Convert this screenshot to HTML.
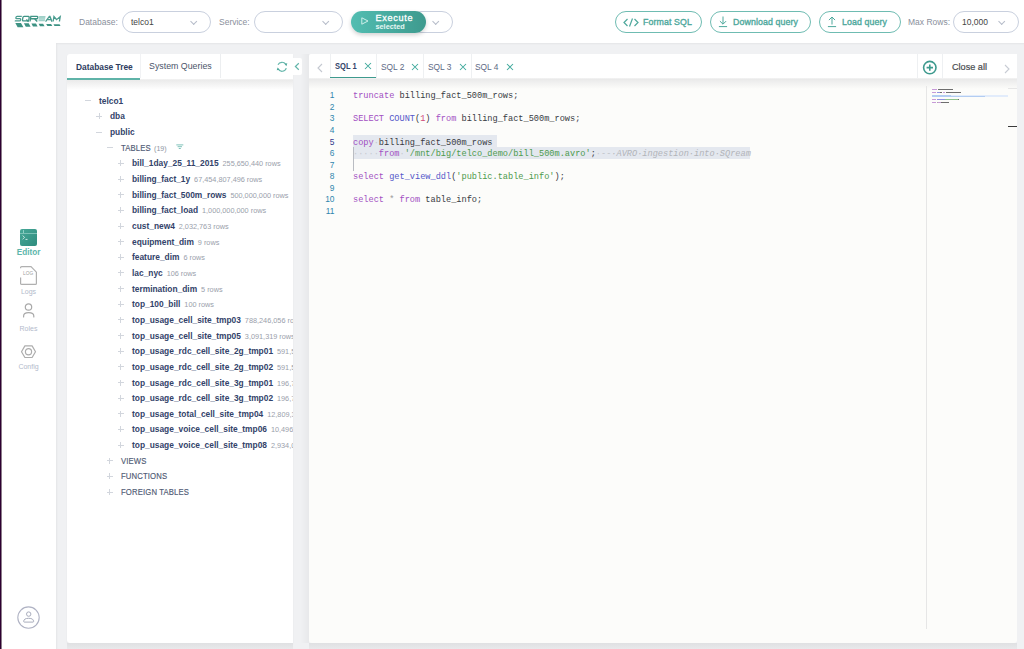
<!DOCTYPE html>
<html><head><meta charset="utf-8"><style>
*{box-sizing:border-box;margin:0;padding:0}
html,body{width:1024px;height:649px;overflow:hidden;background:#fff}
body{position:relative;font-family:"Liberation Sans",sans-serif;color:#333}
.a{position:absolute}
.lb{left:0;top:0;width:1px;height:649px;background:#2d0030}
.lb2{left:1px;top:0;width:1px;height:649px;background:#8c7c8a}
.gray{left:56px;top:43px;width:968px;height:606px;background:#f0f1f3;box-shadow:inset 1px 1px 2px rgba(0,0,0,.05)}
.lbl{font-size:8.5px;color:#8a8f9c;white-space:nowrap;line-height:10px}
.sel{border:1px solid #c9d0de;border-radius:12px;background:#fff;height:22px}
.chev{width:5.4px;height:5.4px;border-right:1px solid #b6bcc9;border-bottom:1px solid #b6bcc9;transform:rotate(45deg)}
.obtn{border:1px solid #6fbcb2;border-radius:12px;background:#fff;height:22px}
.btxt{letter-spacing:0.1px;font-size:8.8px;font-weight:normal;-webkit-text-stroke:0.35px #4ea89c;color:#4ea89c;white-space:nowrap;line-height:10px}
.tn{font-size:8.4px;font-weight:bold;color:#33436a;white-space:nowrap;line-height:11px}
.cnt{font-size:7.3px;font-weight:normal;color:#9aa0ab;margin-left:1.6px}
.tt{font-size:8.3px;color:#4f5a74;-webkit-text-stroke:0.15px #4f5a74;letter-spacing:0.15px;white-space:nowrap;line-height:11px;transform:scaleX(.93);transform-origin:0 0}
.cnt2{font-size:7.6px;color:#8d94a2;-webkit-text-stroke:0;letter-spacing:0;margin-left:1px}
.ic{width:6px;height:6px}
.ic:before{content:"";position:absolute;left:0;top:2.5px;width:6px;height:1px;background:#d2d6dd}
.plus:after{content:"";position:absolute;left:2.5px;top:0;width:1px;height:6px;background:#d2d6dd}
.cl{position:absolute;left:0;white-space:pre;font-family:"Liberation Mono",monospace;font-size:9.2px;line-height:11.58px;transform:scaleX(.937);transform-origin:0 0;color:#383a42}
.ln{position:absolute;width:30px;text-align:right;font-size:8.4px;line-height:11.58px;color:#2f86ad}
.k{color:#a24fc2}.f{color:#5457c9}.n{color:#d04a7a}.s{color:#4d9a4c}.c{color:#b2b4b9;font-style:italic}.p{color:#999}.ws{color:#c6c9d0}
.side{font-size:7px;color:#b3bacb;white-space:nowrap;line-height:9px;text-align:center;width:40px;left:8.5px}
</style></head><body>
<div class="a lb"></div><div class="a lb2"></div>
<div class="a gray"></div>
<svg class="a" style="left:12px;top:12px" width="52" height="18" viewBox="0 0 52 18"><g transform="translate(0.9,0) skewX(-9)" fill="none" stroke-width="1.3" stroke-linejoin="miter"><path d="M9.6 4.45 H4.8 Q3.95 4.45 3.95 5.3 V5.85 Q3.95 6.7 4.8 6.7 H8.1 Q8.95 6.7 8.95 7.55 V8.1 Q8.95 8.95 8.1 8.95 H3.3" stroke="#4a9c8f"/><rect x="10.85" y="4.45" width="6.3" height="4.5" rx="1" stroke="#3f9485"/><path d="M14.6 7.6 L17.2 9.7" stroke="#3f9485"/><path d="M18.65 9.6 V4.45 H24.9 Q25.75 4.45 25.75 5.3 V5.9 Q25.75 6.75 24.9 6.75 H18.65 M22.6 6.75 L25.9 9.6" stroke="#3f9485"/><path d="M27 4.1 H33.3 V9.3 H27 Z" fill="#9fd0c8" stroke="none"/><path d="M27 6.2 H33.3 M27 7.6 H33.3" stroke="#c9e6e1" stroke-width="0.5"/><path d="M34.2 9.6 L37.1 4.45 H37.7 L40.6 9.6 M35.6 7.7 H39.2" stroke="#4a9c8f"/><path d="M41.75 9.6 V4.45 L44.9 7.6 L48.05 4.45 V9.6" stroke="#4a9c8f"/></g><polygon points="3.30,10.90 9.03,10.90 11.40,15.20 5.67,15.20" fill="#3d9283"/><polygon points="11.90,11.30 16.68,11.30 18.60,14.80 13.82,14.80" fill="#3d9283"/><polygon points="19.40,11.60 24.01,11.60 25.60,14.50 20.99,14.50" fill="#3d9283"/><polygon points="26.60,11.80 31.12,11.80 32.50,14.30 27.98,14.30" fill="#3d9283"/><polygon points="34.20,12.00 39.14,12.00 40.30,14.10 35.36,14.10" fill="#3d9283"/><polygon points="41.50,12.20 47.56,12.20 48.50,13.90 42.44,13.90" fill="#3d9283"/></svg>
<div class="a lbl" style="left:79px;top:16.7px">Database:</div>
<div class="a sel" style="left:122px;top:11px;width:89px"></div>
<div class="a lbl" style="left:131px;top:16.7px;color:#444">telco1</div>
<div class="a chev" style="left:190.6px;top:18.6px"></div>
<div class="a lbl" style="left:219px;top:16.7px">Service:</div>
<div class="a sel" style="left:254px;top:11px;width:89px"></div>
<div class="a chev" style="left:322.6px;top:18.6px"></div>
<div class="a sel" style="left:410px;top:11px;width:43px"></div>
<div class="a chev" style="left:432.6px;top:18.6px"></div>
<div class="a" style="left:351px;top:11px;width:75px;height:22px;border-radius:11px;background:linear-gradient(90deg,#52bdb1,#3e9a8e);box-shadow:0 2px 4px rgba(0,0,0,.18)"></div>
<svg class="a" style="left:361px;top:17px" width="8" height="8" viewBox="0 0 8 8"><path d="M0.8 0.8 L7 4 L0.8 7.2 Z" fill="none" stroke="#cdeee9" stroke-width="1" stroke-linejoin="round"/></svg>
<div class="a" style="left:375.5px;top:12.7px;font-size:9.1px;font-weight:normal;-webkit-text-stroke:0.3px #fff;letter-spacing:0.7px;color:#fff;line-height:10px;white-space:nowrap">Execute</div>
<div class="a" style="left:375.5px;top:22.5px;font-size:7.3px;font-weight:bold;color:#e6f6f3;line-height:8px;white-space:nowrap">selected</div>
<div class="a obtn" style="left:615px;top:11px;width:87px"></div>
<div class="a btxt" style="left:643px;top:17.2px">Format SQL</div>
<svg class="a" style="left:623px;top:18px" width="16" height="9" viewBox="0 0 16 9"><path d="M4.5 1 L1 4.5 L4.5 8 M11.5 1 L15 4.5 L11.5 8 M9.5 0.5 L6.5 8.5" fill="none" stroke="#4ea89c" stroke-width="1.2"/></svg>
<div class="a obtn" style="left:710px;top:11px;width:101px"></div>
<div class="a btxt" style="left:733px;top:17.2px">Download query</div>
<svg class="a" style="left:718px;top:16px" width="10" height="12" viewBox="0 0 10 12"><path d="M5 0.5 V8 M1.9 5.1 L5 8.2 L8.1 5.1 M0.9 10.6 H9.1" fill="none" stroke="#4ea89c" stroke-width="1"/></svg>
<div class="a obtn" style="left:819px;top:11px;width:82px"></div>
<div class="a btxt" style="left:842px;top:17.2px">Load query</div>
<svg class="a" style="left:827px;top:16px" width="10" height="12" viewBox="0 0 10 12"><path d="M5 1 V8.5 M1.9 4.1 L5 1 L8.1 4.1 M0.9 10.6 H9.1" fill="none" stroke="#4ea89c" stroke-width="1"/></svg>
<div class="a lbl" style="left:908px;top:16.8px">Max Rows:</div>
<div class="a sel" style="left:953px;top:11px;width:66px"></div>
<div class="a lbl" style="left:962px;top:16.8px;color:#444">10,000</div>
<div class="a chev" style="left:998.6px;top:18.6px"></div>

<div class="a" style="left:20px;top:229.3px;width:17px;height:16.6px;border-radius:2px;background:linear-gradient(135deg,#47a898,#2f8c7e)"></div>
<div class="a" style="left:20px;top:233px;width:17px;height:1px;background:#7cc2b7"></div>
<div class="a" style="left:23px;top:229.5px;width:1px;height:3.5px;background:#8ccfc4"></div>
<svg class="a" style="left:22px;top:235px" width="8" height="6" viewBox="0 0 8 6"><path d="M0.6 0.6 L2.6 2.4 L0.6 4.2" fill="none" stroke="#e0f2ef" stroke-width="0.8"/><path d="M3.5 4.4 H5.5" stroke="#e0f2ef" stroke-width="0.9"/></svg>
<div class="a side" style="top:247.6px;color:#5cb6ab;font-size:8.2px;font-weight:bold">Editor</div>
<svg class="a" style="left:19px;top:265px" width="20" height="21" viewBox="0 0 20 21"><path d="M1.6 3.2 V2.6 Q1.6 1.6 2.6 1.6 H12 L17.4 7.2 V18.4 Q17.4 19.4 16.4 19.4 H2.6 Q1.6 19.4 1.6 18.4 V12.5" fill="none" stroke="#b0b0b0" stroke-width="1.2"/><text x="4.1" y="10.4" font-family="Liberation Sans" font-size="4.8" fill="#9d9d9d">LOG</text></svg>
<div class="a side" style="top:286.5px">Logs</div>
<svg class="a" style="left:21px;top:301px" width="16" height="17" viewBox="0 0 16 17"><circle cx="7.5" cy="6" r="3.2" fill="none" stroke="#a9a9a9" stroke-width="1.2"/><path d="M2.6 15.9 V15 C2.6 12.4 4.9 11.6 7.6 11.6 C10.3 11.6 12.8 12.4 12.8 15 V15.9" fill="none" stroke="#a9a9a9" stroke-width="1.2" stroke-linecap="round"/></svg>
<div class="a side" style="top:324px">Roles</div>
<svg class="a" style="left:20px;top:344px" width="17" height="16" viewBox="0 0 17 16"><path d="M4.9 1.9 H12.1 L15.5 7.7 L12.1 13.5 H4.9 L1.5 7.7 Z" fill="none" stroke="#adadad" stroke-width="1.2" stroke-linejoin="round"/><circle cx="8.5" cy="7.7" r="3.1" fill="none" stroke="#adadad" stroke-width="1.2"/></svg>
<div class="a side" style="top:362px">Config</div>
<svg class="a" style="left:17px;top:606px" width="23" height="23" viewBox="0 0 23 23"><circle cx="11.5" cy="11.6" r="10.7" fill="none" stroke="#b0b3c4" stroke-width="1.1"/><circle cx="11.7" cy="8.1" r="2.2" fill="none" stroke="#a9adbd" stroke-width="1"/><path d="M6.7 15.5 Q6.7 12.3 11.65 12.3 Q16.6 12.3 16.6 15.5 Q16.6 16.1 16 16.1 H7.3 Q6.7 16.1 6.7 15.5 Z" fill="none" stroke="#a9adbd" stroke-width="1"/></svg>

<div class="a" style="left:67px;top:54px;width:226px;height:589px;background:#fff;border-radius:3px 0 0 3px;box-shadow:0 1px 2px rgba(0,0,0,.06)"></div>
<div class="a" style="left:67px;top:78.5px;width:226px;height:11px;background:linear-gradient(#f4f4f4,#ebebeb 12%,#fff)"></div>
<div class="a" style="left:67px;top:78px;width:73px;height:2px;background:#5fb3a8"></div>
<div class="a" style="left:140px;top:54px;width:1px;height:24px;background:#f1f2f4"></div>
<div class="a" style="left:220px;top:54px;width:1px;height:24px;background:#eceef0"></div>
<div class="a" style="left:75.5px;top:61.6px;font-size:9.3px;font-weight:bold;color:#2d3c5e;line-height:10px;white-space:nowrap;transform:scaleX(.9);transform-origin:0 0">Database Tree</div>
<div class="a" style="left:148.8px;top:61.2px;font-size:9.8px;color:#4b556a;line-height:10px;white-space:nowrap;transform:scaleX(.9);transform-origin:0 0">System Queries</div>
<svg class="a" style="left:272px;top:56px" width="20" height="22" viewBox="0 0 20 22"><path d="M5.99 8.76 A4.5 4.5 0 0 1 13.73 8.28 M14.28 12.19 A4.5 4.5 0 0 1 5.99 12.84" fill="none" stroke="#62b5aa" stroke-width="1.15"/><path d="M12.4 7.8 L15.3 7.3 L14.4 10.2 Z M7.6 13.8 L4.7 14.3 L5.6 11.4 Z" fill="#4fa89c"/></svg>
<div class="a" style="left:293px;top:58px;width:9px;height:17px;background:#fff;border-radius:0 2px 2px 0"></div>
<svg class="a" style="left:294px;top:62px" width="7" height="9" viewBox="0 0 7 9"><path d="M4.8 1.3 L1.4 4.5 L4.8 7.7" fill="none" stroke="#62b5aa" stroke-width="1.2"/></svg>

<div class="a" style="left:67px;top:54px;width:226px;height:589px;overflow:hidden">
<div class="a ic minus" style="left:18.30px;top:43.80px"></div>
<div class="a tn" style="left:32.00px;top:41.80px">telco1</div>
<div class="a ic plus" style="left:29.05px;top:59.45px"></div>
<div class="a tn" style="left:43.00px;top:57.45px">dba</div>
<div class="a ic minus" style="left:29.05px;top:75.10px"></div>
<div class="a tn" style="left:43.00px;top:73.10px">public</div>
<div class="a ic minus" style="left:39.80px;top:90.75px"></div>
<div class="a tt" style="left:54.00px;top:88.75px">TABLES <span class="cnt2">(19)</span></div>
<div class="a ic plus" style="left:50.55px;top:106.40px"></div>
<div class="a tn" style="left:65.00px;top:104.40px">bill_1day_25_11_2015 <span class="cnt">255,650,440 rows</span></div>
<div class="a ic plus" style="left:50.55px;top:122.05px"></div>
<div class="a tn" style="left:65.00px;top:120.05px">billing_fact_1y <span class="cnt">67,454,807,496 rows</span></div>
<div class="a ic plus" style="left:50.55px;top:137.70px"></div>
<div class="a tn" style="left:65.00px;top:135.70px">billing_fact_500m_rows <span class="cnt">500,000,000 rows</span></div>
<div class="a ic plus" style="left:50.55px;top:153.35px"></div>
<div class="a tn" style="left:65.00px;top:151.35px">billing_fact_load <span class="cnt">1,000,000,000 rows</span></div>
<div class="a ic plus" style="left:50.55px;top:169.00px"></div>
<div class="a tn" style="left:65.00px;top:167.00px">cust_new4 <span class="cnt">2,032,763 rows</span></div>
<div class="a ic plus" style="left:50.55px;top:184.65px"></div>
<div class="a tn" style="left:65.00px;top:182.65px">equipment_dim <span class="cnt">9 rows</span></div>
<div class="a ic plus" style="left:50.55px;top:200.30px"></div>
<div class="a tn" style="left:65.00px;top:198.30px">feature_dim <span class="cnt">6 rows</span></div>
<div class="a ic plus" style="left:50.55px;top:215.95px"></div>
<div class="a tn" style="left:65.00px;top:213.95px">lac_nyc <span class="cnt">106 rows</span></div>
<div class="a ic plus" style="left:50.55px;top:231.60px"></div>
<div class="a tn" style="left:65.00px;top:229.60px">termination_dim <span class="cnt">5 rows</span></div>
<div class="a ic plus" style="left:50.55px;top:247.25px"></div>
<div class="a tn" style="left:65.00px;top:245.25px">top_100_bill <span class="cnt">100 rows</span></div>
<div class="a ic plus" style="left:50.55px;top:262.90px"></div>
<div class="a tn" style="left:65.00px;top:260.90px">top_usage_cell_site_tmp03 <span class="cnt">788,246,056 rows</span></div>
<div class="a ic plus" style="left:50.55px;top:278.55px"></div>
<div class="a tn" style="left:65.00px;top:276.55px">top_usage_cell_site_tmp05 <span class="cnt">3,091,319 rows</span></div>
<div class="a ic plus" style="left:50.55px;top:294.20px"></div>
<div class="a tn" style="left:65.00px;top:292.20px">top_usage_rdc_cell_site_2g_tmp01 <span class="cnt">591,542,165 rows</span></div>
<div class="a ic plus" style="left:50.55px;top:309.85px"></div>
<div class="a tn" style="left:65.00px;top:307.85px">top_usage_rdc_cell_site_2g_tmp02 <span class="cnt">591,542,165 rows</span></div>
<div class="a ic plus" style="left:50.55px;top:325.50px"></div>
<div class="a tn" style="left:65.00px;top:323.50px">top_usage_rdc_cell_site_3g_tmp01 <span class="cnt">196,775,104 rows</span></div>
<div class="a ic plus" style="left:50.55px;top:341.15px"></div>
<div class="a tn" style="left:65.00px;top:339.15px">top_usage_rdc_cell_site_3g_tmp02 <span class="cnt">196,775,104 rows</span></div>
<div class="a ic plus" style="left:50.55px;top:356.80px"></div>
<div class="a tn" style="left:65.00px;top:354.80px">top_usage_total_cell_site_tmp04 <span class="cnt">12,809,331 rows</span></div>
<div class="a ic plus" style="left:50.55px;top:372.45px"></div>
<div class="a tn" style="left:65.00px;top:370.45px">top_usage_voice_cell_site_tmp06 <span class="cnt">10,496,311 rows</span></div>
<div class="a ic plus" style="left:50.55px;top:388.10px"></div>
<div class="a tn" style="left:65.00px;top:386.10px">top_usage_voice_cell_site_tmp08 <span class="cnt">2,934,004 rows</span></div>
<div class="a ic plus" style="left:39.80px;top:403.75px"></div>
<div class="a tt" style="left:54.00px;top:401.75px">VIEWS</div>
<div class="a ic plus" style="left:39.80px;top:419.40px"></div>
<div class="a tt" style="left:54.00px;top:417.40px">FUNCTIONS</div>
<div class="a ic plus" style="left:39.80px;top:435.05px"></div>
<div class="a tt" style="left:54.00px;top:433.05px">FOREIGN TABLES</div>
</div>
<svg class="a" style="left:176px;top:143.5px" width="8" height="6" viewBox="0 0 8 6"><path d="M0.3 0.9 H7.3 M1.6 2.7 H6 M2.8 4.5 H4.8" stroke="#5fb3a8" stroke-width="0.8"/></svg>
<div class="a" style="left:67px;top:643px;width:226px;height:6px;background:linear-gradient(#dfe0e2,#e8e9eb)"></div>
<div class="a" style="left:309px;top:643px;width:708px;height:6px;background:linear-gradient(#dfe0e2,#e8e9eb)"></div>
<div class="a" style="left:300px;top:54px;width:9px;height:589px;background:linear-gradient(90deg,rgba(0,0,0,0),rgba(0,0,0,.035))"></div>
<div class="a" style="left:309px;top:54px;width:708px;height:589px;background:#fcfcfa;border-radius:3px 0 3px 3px"></div>
<div class="a" style="left:309px;top:54px;width:708px;height:24.5px;background:#fff;border-radius:3px 0 0 0"></div>
<div class="a" style="left:309px;top:78.2px;width:708px;height:11px;background:linear-gradient(#f4f4f4,#eaeaea 12%,#fcfcfa)"></div>

<svg class="a" style="left:316px;top:63px" width="8" height="10" viewBox="0 0 8 10"><path d="M6 1 L2 5 L6 9" fill="none" stroke="#c4c8d0" stroke-width="1.1"/></svg>
<div class="a" style="left:329.5px;top:54px;width:1px;height:24px;background:#eef0f2"></div>
<div class="a" style="left:375.5px;top:54px;width:1px;height:24px;background:#eef0f2"></div>
<div class="a" style="left:422.5px;top:54px;width:1px;height:24px;background:#eef0f2"></div>
<div class="a" style="left:470.8px;top:54px;width:1px;height:24px;background:#eef0f2"></div>
<div class="a" style="left:330px;top:76.7px;width:46px;height:1.8px;background:#3e9a8e"></div>
<div class="a" style="left:916.5px;top:54px;width:1px;height:24px;background:#eef0f2"></div>
<div class="a" style="left:941.5px;top:54px;width:1px;height:24px;background:#eef0f2"></div>
<svg class="a" style="left:921.5px;top:59.8px" width="16" height="16" viewBox="0 0 16 16"><circle cx="7.8" cy="7.6" r="6.2" fill="none" stroke="#3e9a8e" stroke-width="1.6"/><path d="M7.8 4.4 V10.8 M4.6 7.6 H11" stroke="#3e9a8e" stroke-width="1.6"/></svg>
<div class="a" style="left:952px;top:61.5px;font-size:9.15px;color:#4a4c50;-webkit-text-stroke:0.2px #4a4c50;line-height:10px;white-space:nowrap">Close all</div>
<svg class="a" style="left:1003px;top:63.5px" width="8" height="10" viewBox="0 0 8 10"><path d="M2 1 L6 5 L2 9" fill="none" stroke="#c8ccd4" stroke-width="1.1"/></svg>

<div class="a" style="left:334.9px;top:61px;font-size:8.9px;font-weight:bold;color:#34476b;line-height:10px;white-space:nowrap;transform:scaleX(0.85);transform-origin:0 0">SQL 1</div>
<svg class="a" style="left:364.3px;top:62.4px" width="8" height="8" viewBox="0 0 8 8"><path d="M1 1 L7 7 M7 1 L1 7" stroke="#3fa99c" stroke-width="1.05"/></svg>
<div class="a" style="left:380.6px;top:62px;font-size:9.1px;font-weight:normal;color:#5d6a85;line-height:10px;white-space:nowrap;transform:scaleX(0.92);transform-origin:0 0">SQL 2</div>
<svg class="a" style="left:411.1px;top:63.4px" width="8" height="8" viewBox="0 0 8 8"><path d="M1 1 L7 7 M7 1 L1 7" stroke="#3fa99c" stroke-width="1.05"/></svg>
<div class="a" style="left:427.6px;top:62px;font-size:9.1px;font-weight:normal;color:#5d6a85;line-height:10px;white-space:nowrap;transform:scaleX(0.92);transform-origin:0 0">SQL 3</div>
<svg class="a" style="left:458.8px;top:63.4px" width="8" height="8" viewBox="0 0 8 8"><path d="M1 1 L7 7 M7 1 L1 7" stroke="#3fa99c" stroke-width="1.05"/></svg>
<div class="a" style="left:475px;top:62px;font-size:9.1px;font-weight:normal;color:#5d6a85;line-height:10px;white-space:nowrap;transform:scaleX(0.92);transform-origin:0 0">SQL 4</div>
<svg class="a" style="left:506.3px;top:63.4px" width="8" height="8" viewBox="0 0 8 8"><path d="M1 1 L7 7 M7 1 L1 7" stroke="#3fa99c" stroke-width="1.05"/></svg>
<div class="a" style="left:353px;top:135.2px;width:143.6px;height:11.6px;background:#e4e8ef"></div>
<div class="a" style="left:353px;top:146.8px;width:396.5px;height:11.8px;background:#e4e8ef"></div>
<div class="a" style="left:353px;top:146.5px;width:0.9px;height:24px;background:#b9bcc2"></div>
<div class="ln" style="left:304.5px;top:90.20px;color:#2f86ad">1</div>
<div class="cl" style="left:352.8px;top:90.20px"><span class="k">truncate</span> billing_fact_500m_rows;</div>
<div class="ln" style="left:304.5px;top:101.78px;color:#2f86ad">2</div>
<div class="ln" style="left:304.5px;top:113.36px;color:#2f86ad">3</div>
<div class="cl" style="left:352.8px;top:113.36px"><span class="k">SELECT</span> <span class="f">COUNT</span>(<span class="n">1</span>) <span class="k">from</span> billing_fact_500m_rows;</div>
<div class="ln" style="left:304.5px;top:124.94px;color:#2f86ad">4</div>
<div class="ln" style="left:304.5px;top:136.52px;color:#343a8c">5</div>
<div class="cl" style="left:352.8px;top:136.52px"><span class="k">copy</span><span class="ws">·</span>billing_fact_500m_rows</div>
<div class="ln" style="left:304.5px;top:148.10px;color:#2f86ad">6</div>
<div class="cl" style="left:352.8px;top:148.10px"><span class="ws">·····</span><span class="k">from</span><span class="ws">·</span><span class="s">&#x27;/mnt/big/telco_demo/bill_500m.avro&#x27;</span>;<span class="ws">·</span><span class="c">--·AVRO·ingestion·into·SQream</span></div>
<div class="ln" style="left:304.5px;top:159.68px;color:#2f86ad">7</div>
<div class="ln" style="left:304.5px;top:171.26px;color:#2f86ad">8</div>
<div class="cl" style="left:352.8px;top:171.26px"><span class="k">select</span> <span class="f">get_view_ddl</span>(<span class="s">&#x27;public.table_info&#x27;</span>);</div>
<div class="ln" style="left:304.5px;top:182.84px;color:#2f86ad">9</div>
<div class="ln" style="left:304.5px;top:194.42px;color:#2f86ad">10</div>
<div class="cl" style="left:352.8px;top:194.42px"><span class="k">select</span> <span class="p">*</span> <span class="k">from</span> table_info;</div>
<div class="ln" style="left:304.5px;top:206.00px;color:#2f86ad">11</div>
<div class="a" style="left:926.3px;top:86px;width:0.9px;height:542.5px;background:#e6e6e6"></div>
<div class="a" style="left:1007.5px;top:88px;width:9.5px;height:1px;background:#e6e6e6"></div>
<div class="a" style="left:932px;top:94.7px;width:75.6px;height:2.6px;background:#e2ecfb"></div>
<div class="a" style="left:932px;top:94.9px;width:18.5px;height:1.1px;background:#b3cdf2"></div>
<div class="a" style="left:932px;top:96px;width:52.8px;height:1.1px;background:#b3cdf2"></div>
<div class="a" style="left:1007.5px;top:125.8px;width:9.5px;height:1.6px;background:#3a3a3a"></div>

<div class="a" style="left:932.00px;top:89.10px;width:5.36px;height:1.15px;background:#c79ad8"></div>
<div class="a" style="left:938.03px;top:89.10px;width:15.41px;height:1.15px;background:#6e6e6e"></div>
<div class="a" style="left:932.00px;top:91.86px;width:4.02px;height:1.15px;background:#c79ad8"></div>
<div class="a" style="left:936.69px;top:91.86px;width:3.35px;height:1.15px;background:#8f92e0"></div>
<div class="a" style="left:940.04px;top:91.86px;width:0.67px;height:1.15px;background:#6e6e6e"></div>
<div class="a" style="left:940.71px;top:91.86px;width:0.67px;height:1.15px;background:#e090b0"></div>
<div class="a" style="left:941.38px;top:91.86px;width:0.67px;height:1.15px;background:#6e6e6e"></div>
<div class="a" style="left:942.72px;top:91.86px;width:2.68px;height:1.15px;background:#c79ad8"></div>
<div class="a" style="left:946.07px;top:91.86px;width:15.41px;height:1.15px;background:#6e6e6e"></div>
<div class="a" style="left:932.00px;top:98.76px;width:4.02px;height:1.15px;background:#c79ad8"></div>
<div class="a" style="left:936.69px;top:98.76px;width:8.04px;height:1.15px;background:#8f92e0"></div>
<div class="a" style="left:944.73px;top:98.76px;width:0.67px;height:1.15px;background:#6e6e6e"></div>
<div class="a" style="left:945.40px;top:98.76px;width:12.73px;height:1.15px;background:#8fc58e"></div>
<div class="a" style="left:958.13px;top:98.76px;width:1.34px;height:1.15px;background:#6e6e6e"></div>
<div class="a" style="left:932.00px;top:101.52px;width:4.02px;height:1.15px;background:#c79ad8"></div>
<div class="a" style="left:936.69px;top:101.52px;width:0.67px;height:1.15px;background:#aaaaaa"></div>
<div class="a" style="left:938.03px;top:101.52px;width:2.68px;height:1.15px;background:#c79ad8"></div>
<div class="a" style="left:941.38px;top:101.52px;width:7.37px;height:1.15px;background:#6e6e6e"></div>
</body></html>
